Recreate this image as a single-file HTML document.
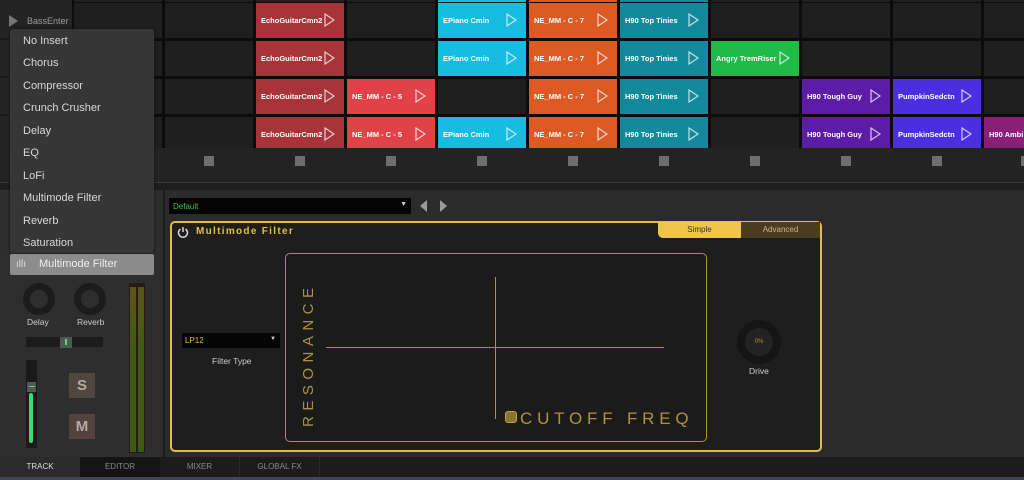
<!DOCTYPE html>
<html><head><style>
*{margin:0;padding:0;box-sizing:border-box}
body{width:1024px;height:480px;overflow:hidden;background:#2b2b2b;font-family:"Liberation Sans",sans-serif;position:relative}
.a{position:absolute}
.cell{position:absolute;height:35px;width:88px;background:#1f1f1f}
.clip{color:#fff;font-size:7.5px;font-weight:bold;padding:13px 0 0 5px;white-space:nowrap;overflow:hidden}
.clip svg{position:absolute;right:9px;top:10px}
.mi{position:absolute;left:23px;color:#d8d8d8;font-size:11px}
.sq{position:absolute;top:156px;width:10px;height:10px;background:#6e6e6e}
.tab{position:absolute;top:457px;height:20px;width:80px;font-size:8px;color:#888;text-align:center;line-height:20px}
</style></head><body>
<div class="a" style="left:0;top:0;width:1024px;height:148px;background:#0c0c0c"></div>
<div class="a" style="left:0;top:0;width:72px;height:148px;background:#242424"></div>
<div class="a" style="left:0;top:38px;width:72px;height:2px;background:#1a1a1a"></div>
<div class="a" style="left:0;top:76px;width:72px;height:2px;background:#1a1a1a"></div>
<div class="a" style="left:0;top:114px;width:72px;height:2px;background:#1a1a1a"></div>
<svg class="a" style="left:9px;top:15px" width="10" height="12"><path d="M0 0 L9 6 L0 12Z" fill="#777"/></svg>
<div class="a" style="left:27px;top:16px;font-size:9px;color:#999">BassEnter</div>
<div id="grid"></div>
<div class="a" style="left:0;top:148px;width:1024px;height:34px;background:#232323"></div>
<div class="a" style="left:0;top:182px;width:1024px;height:8px;background:#1e1e1e;border-top:1px solid #3a3a3a"></div>
<div class="a" style="left:0;top:190px;width:163px;height:267px;background:#2e2e2e"></div>
<div class="a" style="left:163px;top:190px;width:2px;height:267px;background:#1c1c1c"></div>
<div class="a" style="left:165px;top:190px;width:859px;height:267px;background:#2b2b2b"></div>
<div class="sq" style="left:204px"></div><div class="sq" style="left:295px"></div><div class="sq" style="left:386px"></div><div class="sq" style="left:477px"></div><div class="sq" style="left:568px"></div><div class="sq" style="left:659px"></div><div class="sq" style="left:750px"></div><div class="sq" style="left:841px"></div><div class="sq" style="left:932px"></div><div class="sq" style="left:1021px"></div>
<div class="a" style="left:169px;top:198px;width:242px;height:16px;background:#050505;color:#3fbf4f;font-size:8px;padding:4px 4px"><span>Default</span><span style="position:absolute;right:4px;top:3px;color:#ccc;font-size:7px">▼</span></div>
<svg class="a" style="left:420px;top:200px" width="28" height="12"><path d="M7 0 L0 6 L7 12Z" fill="#999"/><path d="M20 0 L27 6 L20 12Z" fill="#999"/></svg>
<div class="a" style="left:170px;top:221px;width:652px;height:231px;border:2px solid #e3bd45;border-radius:5px;background:#1e1e1e"></div>
<svg class="a" style="left:177px;top:226px" width="12" height="12"><path d="M3.5 3 A4.5 4.5 0 1 0 8.5 3" fill="none" stroke="#ccc" stroke-width="1.6"/><path d="M6 1 V6" stroke="#ccc" stroke-width="1.6"/></svg>
<div class="a" style="left:196px;top:226px;color:#e3bd45;font-size:10px;font-weight:bold;letter-spacing:1.3px">Multimode Filter</div>
<div class="a" style="left:658px;top:222px;width:83px;height:16px;background:#f0c64a;border-bottom-left-radius:5px;font-size:8px;color:#333;text-align:center;line-height:16px">Simple</div>
<div class="a" style="left:741px;top:222px;width:79px;height:16px;background:#4a3c1e;font-size:8px;color:#c9b48a;text-align:center;line-height:16px">Advanced</div>
<div class="a" style="left:285px;top:253px;width:422px;height:189px;border:1px solid #b0913a;border-radius:5px;background:#1b1b1b"></div>
<div class="a" style="left:495px;top:277px;width:1px;height:142px;background:#b0913a"></div>
<div class="a" style="left:326px;top:347px;width:338px;height:1px;background:#b0913a"></div>
<div class="a" style="left:300px;top:427px;transform:rotate(-90deg);transform-origin:0 0;color:#b0913a;font-size:15px;letter-spacing:5.5px;white-space:nowrap">RESONANCE</div>
<div class="a" style="left:505px;top:411px;width:12px;height:12px;border-radius:3px;background:#8a7530;border:1px solid #c0a040"></div>
<div class="a" style="left:520px;top:409px;color:#b0913a;font-size:17px;letter-spacing:4.8px;white-space:nowrap">CUTOFF FREQ</div>
<div class="a" style="left:182px;top:333px;width:98px;height:15px;background:#050505;color:#e3bd45;font-size:8px;padding:3px 3px">LP12<span style="position:absolute;right:4px;top:3px;color:#ccc;font-size:6px">▼</span></div>
<div class="a" style="left:212px;top:356px;color:#ccc;font-size:8.5px">Filter Type</div>
<div class="a" style="left:737px;top:320px;width:44px;height:44px;border-radius:50%;background:#151515"></div>
<div class="a" style="left:745px;top:328px;width:28px;height:28px;border-radius:50%;background:#232323;color:#b0913a;font-size:6px;text-align:center;line-height:28px">0%</div>
<div class="a" style="left:749px;top:366px;color:#ccc;font-size:8.5px">Drive</div>
<div class="a" style="left:23px;top:283px;width:32px;height:32px;border-radius:50%;border:7px solid #1c1c1c;background:#2e2e2e"></div>
<div class="a" style="left:74px;top:283px;width:32px;height:32px;border-radius:50%;border:7px solid #1c1c1c;background:#2e2e2e"></div>
<div class="a" style="left:27px;top:317px;color:#ccc;font-size:8.5px">Delay</div>
<div class="a" style="left:77px;top:317px;color:#ccc;font-size:8.5px">Reverb</div>
<div class="a" style="left:26px;top:337px;width:77px;height:10px;background:#1c1c1c"></div>
<div class="a" style="left:60px;top:337px;width:12px;height:11px;background:#4e5a52"></div>
<div class="a" style="left:65px;top:339px;width:2px;height:6px;background:#3fe07a"></div>
<div class="a" style="left:26px;top:360px;width:11px;height:88px;background:#1a1a1a"></div>
<div class="a" style="left:29px;top:393px;width:4px;height:50px;background:#38d873;border-radius:2px"></div>
<div class="a" style="left:27px;top:382px;width:9px;height:10px;background:#4e5a52"></div>
<div class="a" style="left:29px;top:386px;width:6px;height:1px;background:#3fe07a"></div>
<div class="a" style="left:69px;top:373px;width:26px;height:25px;background:#4f463e;color:#b5aba0;font-weight:bold;font-size:15px;text-align:center;line-height:25px">S</div>
<div class="a" style="left:69px;top:414px;width:26px;height:25px;background:#54423e;color:#b8aaa0;font-weight:bold;font-size:15px;text-align:center;line-height:25px">M</div>
<div class="a" style="left:129px;top:283px;width:16px;height:170px;background:#2a1a14"></div>
<div class="a" style="left:130px;top:287px;width:6px;height:165px;background:linear-gradient(#58551a,#4e5a10 20%,#3e5a10 40%,#3e5a10)"></div>
<div class="a" style="left:138px;top:287px;width:6px;height:165px;background:linear-gradient(#58551a,#4e5a10 20%,#3e5a10 40%,#3e5a10)"></div>
<div class="a" style="left:10px;top:29px;width:144px;height:224px;background:#363636;border-radius:3px;box-shadow:0 0 3px #111"></div>
<div class="mi" style="top:35px">No Insert</div>
<div class="mi" style="top:57px">Chorus</div>
<div class="mi" style="top:80px">Compressor</div>
<div class="mi" style="top:102px">Crunch Crusher</div>
<div class="mi" style="top:125px">Delay</div>
<div class="mi" style="top:147px">EQ</div>
<div class="mi" style="top:170px">LoFi</div>
<div class="mi" style="top:192px">Multimode Filter</div>
<div class="mi" style="top:215px">Reverb</div>
<div class="mi" style="top:237px">Saturation</div>
<div class="a" style="left:10px;top:254px;width:144px;height:21px;background:#8c8c8c;border-radius:2px"></div>
<div class="a" style="left:16px;top:259px;color:#ddd;font-size:10px">ıllı</div>
<div class="a" style="left:39px;top:258px;color:#eee;font-size:11px">Multimode Filter</div>
<div class="a" style="left:0;top:457px;width:1024px;height:23px;background:#1c1c1c"></div>
<div class="tab" style="left:0;background:#2b2b2b;color:#ddd">TRACK</div>
<div class="tab" style="left:80px;background:#141414">EDITOR</div>
<div class="tab" style="left:160px;background:#1c1c1c;border-right:1px solid #2a2a2a">MIXER</div>
<div class="tab" style="left:240px;background:#1c1c1c;border-right:1px solid #2a2a2a">GLOBAL FX</div>
<div class="a" style="left:0;top:477px;width:1024px;height:3px;background:#3a4a5a"></div>
<script>
var cols=[74,165,256,347,438,529,620,711,802,893,984];
var C={e:'#a8343a',n5:'#e04248',ep:'#17bde0',n7:'#dd5a24',h:'#138a9c',ag:'#1fba48',t:'#5c1ca8',p:'#4b2ee0',am:'#8a1f7a'};
var L={e:'EchoGuitarCmn2',n5:'NE_MM - C - 5',ep:'EPiano Cmin',n7:'NE_MM - C - 7',h:'H90 Top Tinies',ag:'Angry TremRiser',t:'H90 Tough Guy',p:'PumpkinSedctn',am:'H90 Ambi'};
var rows=[[0,0,'e',0,'ep','n7','h',0,0,0,0],[0,0,'e',0,'ep','n7','h','ag',0,0,0],[0,0,'e','n5',0,'n7','h',0,'t','p',0],[0,0,'e','n5','ep','n7','h',0,'t','p','am']];
var tops=[3,41,79,117],h='';
for(var c=0;c<11;c++)h+='<div class="cell" style="left:'+cols[c]+'px;top:-35px;height:37px;background:'+(c==4?'#17bde0':c==5?'#dd5a24':c==6?'#138a9c':'#1f1f1f')+'"></div>';
rows.forEach(function(r,i){r.forEach(function(k,c){var hh=i==3?31:35;
if(!k){h+='<div class="cell" style="left:'+cols[c]+'px;top:'+tops[i]+'px;height:'+hh+'px"></div>';return;}
h+='<div class="cell clip" style="left:'+cols[c]+'px;top:'+tops[i]+'px;height:'+hh+'px;background:'+C[k]+'">'+L[k]+(k=='am'?'':'<svg width="11" height="14"><path d="M1 1 L10 7 L1 13Z" fill="none" stroke="rgba(255,255,255,.75)" stroke-width="1.2"/></svg>')+'</div>';});});
document.getElementById('grid').innerHTML=h;
</script>
</body></html>
